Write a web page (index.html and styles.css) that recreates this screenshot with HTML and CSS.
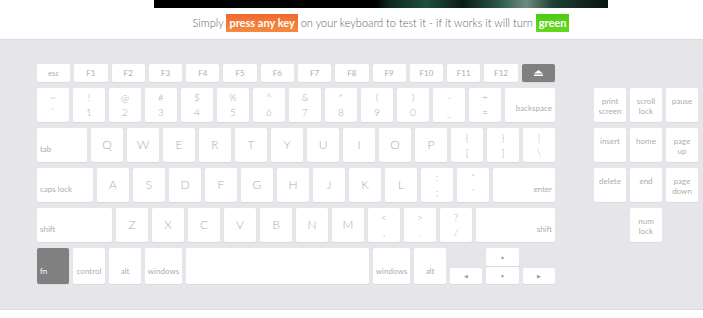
FILE: index.html
```html
<!DOCTYPE html>
<html lang="en">
<head>
    <meta charset="UTF-8">
    <title>Keyboard Test</title>
    <link rel="stylesheet" href="styles.css">
</head>
<body>
<div class="hero">
    <div class="hero__image"></div>
    <p class="hero__text">Simply <span class="tag tag_orange">press any key</span> on your keyboard to test it - if it works it will turn <span class="tag tag_green">green</span></p>
</div>

<div class="kb">
    <div class="kb__main">
        <div class="kb__row kb__row_fn">
            <div class="key">esc</div>
            <div class="key">F1</div>
            <div class="key">F2</div>
            <div class="key">F3</div>
            <div class="key">F4</div>
            <div class="key">F5</div>
            <div class="key">F6</div>
            <div class="key">F7</div>
            <div class="key">F8</div>
            <div class="key">F9</div>
            <div class="key">F10</div>
            <div class="key">F11</div>
            <div class="key">F12</div>
            <div class="key key_dark key_eject">
                <svg width="9" height="6" viewBox="0 0 9 6"><path d="M4.5 0 L9 3.6 H0 Z M0 4.6 H9 V6 H0 Z" fill="#fff"/></svg>
            </div>
        </div>
        <div class="kb__row">
            <div class="key key_dual"><span>~</span><span>`</span></div>
            <div class="key key_dual"><span>!</span><span>1</span></div>
            <div class="key key_dual"><span>@</span><span>2</span></div>
            <div class="key key_dual"><span>#</span><span>3</span></div>
            <div class="key key_dual"><span>$</span><span>4</span></div>
            <div class="key key_dual"><span>%</span><span>5</span></div>
            <div class="key key_dual"><span>^</span><span>6</span></div>
            <div class="key key_dual"><span>&amp;</span><span>7</span></div>
            <div class="key key_dual"><span>*</span><span>8</span></div>
            <div class="key key_dual"><span>(</span><span>9</span></div>
            <div class="key key_dual"><span>)</span><span>0</span></div>
            <div class="key key_dual"><span>-</span><span>_</span></div>
            <div class="key key_dual"><span>+</span><span>=</span></div>
            <div class="key key_fill key_right key_mid">backspace</div>
        </div>
        <div class="kb__row">
            <div class="key key_fill key_left">tab</div>
            <div class="key key_letter">Q</div>
            <div class="key key_letter">W</div>
            <div class="key key_letter">E</div>
            <div class="key key_letter">R</div>
            <div class="key key_letter">T</div>
            <div class="key key_letter">Y</div>
            <div class="key key_letter">U</div>
            <div class="key key_letter">I</div>
            <div class="key key_letter">O</div>
            <div class="key key_letter">P</div>
            <div class="key key_dual"><span>{</span><span>[</span></div>
            <div class="key key_dual"><span>}</span><span>]</span></div>
            <div class="key key_dual"><span>|</span><span>\</span></div>
        </div>
        <div class="kb__row">
            <div class="key key_caps key_left">caps lock</div>
            <div class="key key_letter">A</div>
            <div class="key key_letter">S</div>
            <div class="key key_letter">D</div>
            <div class="key key_letter">F</div>
            <div class="key key_letter">G</div>
            <div class="key key_letter">H</div>
            <div class="key key_letter">J</div>
            <div class="key key_letter">K</div>
            <div class="key key_letter">L</div>
            <div class="key key_dual"><span>:</span><span>;</span></div>
            <div class="key key_dual"><span>"</span><span>'</span></div>
            <div class="key key_fill key_right">enter</div>
        </div>
        <div class="kb__row">
            <div class="key key_shift key_left">shift</div>
            <div class="key key_letter">Z</div>
            <div class="key key_letter">X</div>
            <div class="key key_letter">C</div>
            <div class="key key_letter">V</div>
            <div class="key key_letter">B</div>
            <div class="key key_letter">N</div>
            <div class="key key_letter">M</div>
            <div class="key key_dual"><span>&lt;</span><span>,</span></div>
            <div class="key key_dual"><span>&gt;</span><span>.</span></div>
            <div class="key key_dual"><span>?</span><span>/</span></div>
            <div class="key key_fill key_right">shift</div>
        </div>
        <div class="kb__row kb__row_bottom">
            <div class="key key_dark key_left key_low">fn</div>
            <div class="key key_low">control</div>
            <div class="key key_low">alt</div>
            <div class="key key_low key_win">windows</div>
            <div class="key key_fill"></div>
            <div class="key key_low key_win">windows</div>
            <div class="key key_low">alt</div>
            <div class="key key_arrow">&#9664;</div>
            <div class="arrows">
                <div class="key key_arrow key_arrow_up">&#9650;</div>
                <div class="key key_arrow key_arrow_down">&#9660;</div>
            </div>
            <div class="key key_arrow">&#9654;</div>
        </div>
    </div>

    <div class="kb__side">
        <div class="key key_top">print<br>screen</div>
        <div class="key key_top">scroll<br>lock</div>
        <div class="key key_top">pause</div>
        <div class="key key_top">insert</div>
        <div class="key key_top">home</div>
        <div class="key key_top">page<br>up</div>
        <div class="key key_top">delete</div>
        <div class="key key_top">end</div>
        <div class="key key_top">page<br>down</div>
        <div class="key key_top key_numlock">num<br>lock</div>
    </div>
</div>
</body>
</html>
```

FILE: styles.css
```css
* {
    box-sizing: border-box;
    font-family: Lato, 'Open Sans', sans-serif;
}
body {
    margin: 0;
    background-color: #fff;
}
.hero {
    width: 454px;
    margin-left: 154px;
    text-align: center;
}
.hero__image {
    height: 8px;
    background: linear-gradient(90deg, #000 0%, #000 49%, #0f2a22 52%, #1f4d3e 60%, #0b1a16 68%, #2b5a48 76%, #6f8a80 82%, #1c3f33 88%, #0a1412 100%);
}
.hero__text {
    margin: 5px 0 0;
    height: 26px;
    color: #666;
    font-size: 11px;
    font-weight: 300;
    line-height: 19px;
    white-space: nowrap;
}
.tag {
    display: inline-block;
    padding: 0 3px;
    color: #fff;
    font-weight: 700;
    line-height: 18px;
}
.tag_orange {
    background: linear-gradient(180deg, #f0692f, #f58a3e);
}
.tag_green {
    background: linear-gradient(180deg, #4ccc14, #66d81e);
}
.kb {
    display: flex;
    padding: 24px 5px 25px 37px;
    background-color: #e6e6ea;
    border-top: 1px solid #dcdce0;
    border-bottom: 1px solid #dcdce0;
}
.kb__main {
    display: flex;
    flex-direction: column;
    gap: 6px;
    width: 518px;
}
.kb__row {
    display: flex;
    gap: 4px;
    height: 34px;
}
.kb__row_fn {
    height: 18px;
}
.kb__row_bottom {
    height: 36px;
    align-items: flex-end;
}
.key {
    display: flex;
    align-items: center;
    justify-content: center;
    flex: 0 0 32px;
    height: 100%;
    padding: 0 3px;
    color: #adadad;
    font-size: 8px;
    line-height: 10px;
    background-color: #fff;
    border-radius: 2px;
    box-shadow: 0 1px 0 #dadade;
}
.kb__row_fn .key {
    flex: 1 1 0;
}
.key_dark {
    color: #fff;
    background-color: #808080;
}
.key_letter {
    font-size: 12px;
    font-weight: 300;
}
.key_dual {
    flex-direction: column;
    font-size: 10px;
    font-weight: 300;
    line-height: 15px;
}
.key_fill {
    flex: 1 1 0;
}
.key_caps {
    flex: 0 0 56px;
}
.key_shift {
    flex: 0 0 75px;
}
.key_left {
    justify-content: flex-start;
    align-items: flex-end;
    padding-bottom: 8px;
}
.key_right {
    justify-content: flex-end;
    align-items: flex-end;
    padding-bottom: 8px;
}
.key_mid {
    padding-bottom: 9px;
}
.key_low {
    align-items: flex-end;
    padding-bottom: 8px;
}
.key_win {
    flex-basis: 37px;
    padding: 0 1px 8px;
}
.key_arrow {
    height: 16px;
    font-size: 5px;
    color: #999;
}
.arrows {
    display: flex;
    flex-direction: column;
    flex: 0 0 33px;
    height: 36px;
    gap: 1px;
}
.arrows .key_arrow {
    flex: 0 0 auto;
    height: 18px;
}
.key_arrow_down {
    height: 17px !important;
}
.kb__side {
    display: grid;
    grid-template-columns: repeat(3, 32px);
    grid-auto-rows: 34px;
    gap: 6px 4px;
    align-content: start;
    margin-left: 39px;
    padding-top: 24px;
}
.kb__side .key {
    padding: 0;
}
.key_top {
    align-items: flex-start;
    padding-top: 8px !important;
    text-align: center;
}
.key_numlock {
    grid-column: 2;
}
```
